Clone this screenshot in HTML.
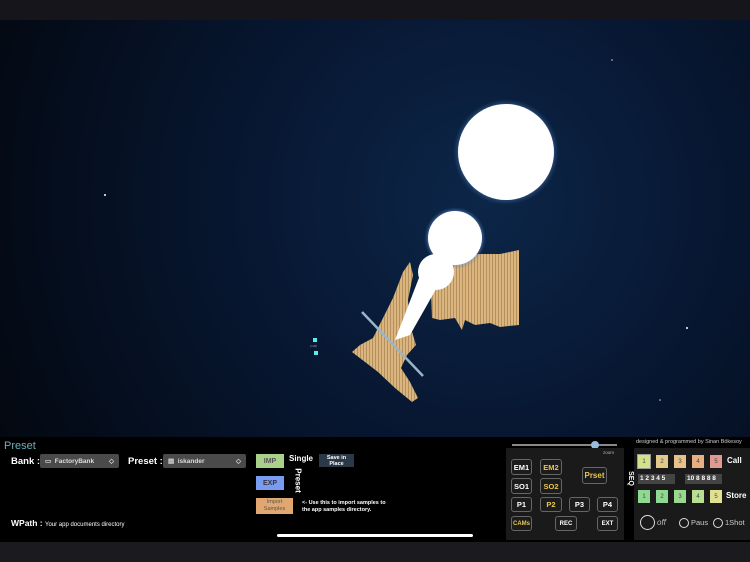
<!DOCTYPE html>
<html><head><meta charset="utf-8"><style>
*{margin:0;padding:0;box-sizing:border-box}
body{width:750px;height:562px;background:#000;font-family:"Liberation Sans",sans-serif;position:relative;overflow:hidden;color:#fff}
.a{position:absolute}
.btn{position:absolute;border:1.5px solid #666;border-radius:3px;background:#1c1c1c;color:#fff;font-size:7.5px;font-weight:bold;display:flex;align-items:center;justify-content:center}
.y{color:#e8c850}
.sq{position:absolute;width:12px;height:13px;font-size:6px;color:#444;display:flex;align-items:center;justify-content:center}
.dd{position:absolute;height:14px;background:#4a4a4a;border-radius:2px;font-size:6.5px;font-weight:bold;color:#ddd;display:flex;align-items:center;padding-left:5px}
</style></head><body>
<div class="a" style="left:0;top:0;width:750px;height:20px;background:#15151b"></div>
<svg class="a" style="left:0;top:20px" width="750" height="417" viewBox="0 20 750 417">
<defs>
<radialGradient id="bg" cx="480" cy="200" r="560" gradientUnits="userSpaceOnUse">
<stop offset="0" stop-color="#0c2648"/><stop offset="0.45" stop-color="#071630"/><stop offset="1" stop-color="#03070e"/></radialGradient>
<radialGradient id="gl" cx="0.5" cy="0.5" r="0.5"><stop offset="0.8" stop-color="#8fbfff" stop-opacity="0.7"/><stop offset="1" stop-color="#3060a0" stop-opacity="0"/></radialGradient>
<pattern id="st" width="3" height="10" patternUnits="userSpaceOnUse"><rect width="3" height="10" fill="#dbb57c"/><rect width="0.8" height="10" fill="#a8875a"/></pattern>
</defs>
<rect x="0" y="20" width="750" height="417" fill="url(#bg)"/>
<circle cx="105" cy="195" r="1" fill="#fff"/><circle cx="687" cy="328" r="1" fill="#fff"/><circle cx="612" cy="60" r="0.8" fill="#ccc"/><circle cx="660" cy="400" r="0.8" fill="#ccc"/>
<polygon points="430,262 445,258 460,256 480,254 500,254 519,250 519,325 500,327 490,323 475,325 465,320 462,330 455,318 440,320 432,318" fill="url(#st)"/>
<polygon points="360,345 373,338 383,318 393,298 403,272 410,262 413,275 408,300 410,325 416,345 407,355 401,368 410,382 418,398 412,402 395,388 378,372 352,352" fill="url(#st)"/>
<line x1="362" y1="312" x2="423" y2="376" stroke="#9ab4c8" stroke-width="2.5"/>
<polygon points="395,340 422,270 448,268 410,335" fill="#fff"/>
<circle cx="506" cy="152" r="53" fill="url(#gl)"/>
<circle cx="506" cy="152" r="48" fill="#fff"/>
<circle cx="455" cy="238" r="31" fill="url(#gl)"/>
<circle cx="455" cy="238" r="27" fill="#fff"/>
<circle cx="436" cy="272" r="18" fill="#fff"/>
<rect x="313" y="338" width="4" height="4" fill="#5ee"/><rect x="314" y="351" width="4" height="4" fill="#5ee"/>
<text x="310" y="347" font-size="3" fill="#aaa">(=off)</text>
</svg>
<div class="a" style="left:0;top:542px;width:750px;height:20px;background:#1b1b1f"></div>
<div class="a" style="left:4px;top:440px;font-size:11px;color:#6ab0c0">Preset</div>
<div class="a" style="left:11px;top:456px;font-size:9.5px;font-weight:bold">Bank :</div>
<div class="dd" style="left:40px;top:454px;width:79px">▭&nbsp; FactoryBank<span style="position:absolute;right:5px">◇</span></div>
<div class="a" style="left:128px;top:456px;font-size:9.5px;font-weight:bold">Preset :</div>
<div class="dd" style="left:163px;top:454px;width:83px">▤&nbsp; iskander<span style="position:absolute;right:5px">◇</span></div>
<div class="a" style="left:256px;top:454px;width:28px;height:14px;background:#a8d08a;color:#555;font-size:7px;font-weight:bold;display:flex;align-items:center;justify-content:center">IMP</div>
<div class="a" style="left:289px;top:454px;font-size:8px;font-weight:bold">Single</div>
<div class="a" style="left:319px;top:454px;width:35px;height:13px;background:#2a3848;font-size:5.5px;font-weight:bold;text-align:center;line-height:6px;padding-top:1px">Save in<br>Place</div>
<div class="a" style="left:286px;top:476px;font-size:8px;font-weight:bold;transform:rotate(90deg);transform-origin:center">Preset</div>
<div class="a" style="left:256px;top:476px;width:28px;height:14px;background:#7a9cf0;color:#334;font-size:7px;font-weight:bold;display:flex;align-items:center;justify-content:center">EXP</div>
<div class="a" style="left:256px;top:498px;width:37px;height:16px;background:#e0a870;color:#555;font-size:5.5px;text-align:center;line-height:7px;padding-top:1px">Import<br>Samples</div>
<div class="a" style="left:302px;top:500px;font-size:5.5px;font-weight:bold;line-height:7px">&lt;- Use this to import samples to<br>the app samples directory.</div>
<div class="a" style="left:11px;top:518px;font-size:8.5px;font-weight:bold">WPath : <span style="font-size:6px;font-weight:normal">Your app documents directory</span></div>
<div class="a" style="left:277px;top:534px;width:196px;height:3px;background:#fff;border-radius:2px"></div>
<div class="a" style="left:512px;top:444px;width:105px;height:2px;background:#888"></div>
<div class="a" style="left:591px;top:441px;width:8px;height:8px;border-radius:50%;background:#9bd"></div>
<div class="a" style="left:506px;top:448px;width:118px;height:92px;background:#1a1a1a"></div>
<div class="a" style="left:603px;top:450px;font-size:4.5px;color:#bbb">zoom</div>
<div class="btn" style="left:511px;top:459px;width:21px;height:16px">EM1</div>
<div class="btn y" style="left:540px;top:459px;width:22px;height:16px">EM2</div>
<div class="btn y" style="left:582px;top:467px;width:25px;height:17px;font-size:8px">Prset</div>
<div class="btn" style="left:511px;top:478px;width:21px;height:16px">SO1</div>
<div class="btn y" style="left:540px;top:478px;width:22px;height:16px">SO2</div>
<div class="btn" style="left:511px;top:497px;width:21px;height:15px">P1</div>
<div class="btn y" style="left:540px;top:497px;width:22px;height:15px">P2</div>
<div class="btn" style="left:569px;top:497px;width:21px;height:15px">P3</div>
<div class="btn" style="left:597px;top:497px;width:21px;height:15px">P4</div>
<div class="btn y" style="left:511px;top:516px;width:21px;height:15px;font-size:6px">CAMs</div>
<div class="btn" style="left:555px;top:516px;width:22px;height:15px;font-size:6px">REC</div>
<div class="btn" style="left:597px;top:516px;width:21px;height:15px;font-size:6px">EXT</div>
<div class="a" style="left:623px;top:475px;font-size:7px;font-weight:bold;transform:rotate(90deg)">SEQ</div>
<div class="a" style="left:636px;top:439px;font-size:5.5px;color:#ccc">designed &amp; programmed by Sinan Bökesoy</div>
<div class="a" style="left:634px;top:448px;width:116px;height:92px;background:#1a1a1a"></div>
<div class="sq" style="left:638px;top:455px;background:#d4e08a;outline:1px solid #999">1</div>
<div class="sq" style="left:656px;top:455px;background:#e0c98a">2</div>
<div class="sq" style="left:674px;top:455px;background:#e8c08a">3</div>
<div class="sq" style="left:692px;top:455px;background:#e8b080">4</div>
<div class="sq" style="left:710px;top:455px;background:#e09a90">5</div>
<div class="a" style="left:727px;top:456px;font-size:8px;font-weight:bold">Call</div>
<div class="a" style="left:638px;top:474px;width:37px;height:10px;background:#444;font-size:6.5px;font-weight:bold;padding-left:2px;line-height:10px">1 2 3 4 5</div>
<div class="a" style="left:685px;top:474px;width:37px;height:10px;background:#444;font-size:6.5px;font-weight:bold;padding-left:2px;line-height:10px">10 8 8 8 8</div>
<div class="sq" style="left:638px;top:490px;background:#8fd890">1</div>
<div class="sq" style="left:656px;top:490px;background:#8fd890">2</div>
<div class="sq" style="left:674px;top:490px;background:#9ad890">3</div>
<div class="sq" style="left:692px;top:490px;background:#b8e090">4</div>
<div class="sq" style="left:710px;top:490px;background:#e0e090">5</div>
<div class="a" style="left:726px;top:491px;font-size:8px;font-weight:bold">Store</div>
<div class="a" style="left:640px;top:515px;width:15px;height:15px;border:1px solid #ddd;border-radius:50%"></div>
<div class="a" style="left:657px;top:518px;font-size:8px;font-style:italic;color:#bbb">off</div>
<div class="a" style="left:679px;top:518px;width:10px;height:10px;border:1px solid #ddd;border-radius:50%"></div>
<div class="a" style="left:691px;top:518px;font-size:7.5px;color:#ccc">Paus</div>
<div class="a" style="left:713px;top:518px;width:10px;height:10px;border:1px solid #ddd;border-radius:50%"></div>
<div class="a" style="left:725px;top:518px;font-size:7.5px;color:#ccc">1Shot</div>
</body></html>
